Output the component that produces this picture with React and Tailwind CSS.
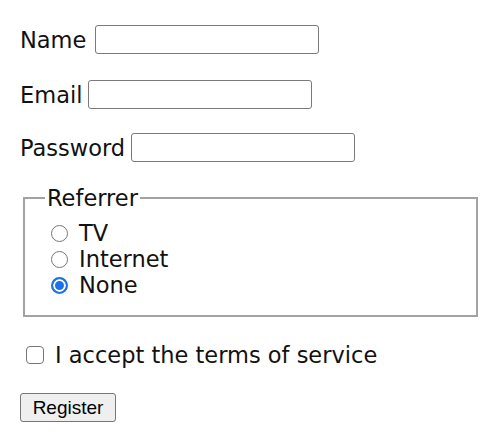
import React from "react";

const font = { fontFamily: '"DejaVu Sans", sans-serif' };

function Field({ label, id, type = "text", gap = "ml-[7px]" }) {
  return (
    <div className="flex items-center h-[29px]">
      <label htmlFor={id} className="leading-[26px]">{label}</label>
      <input
        id={id}
        type={type}
        className={`${gap} w-[224px] h-[29px] border border-[#7a7a7a] rounded-[3px] bg-white px-[3px] outline-none`}
      />
    </div>
  );
}

function Radio({ label, checked }) {
  return (
    <label className="flex items-center h-[26px] pl-[6px]">
      <input
        type="radio"
        name="ref"
        defaultChecked={checked}
        className="appearance-none w-[17px] h-[17px] m-0 rounded-full border border-[#767676] bg-white checked:border-2 checked:border-[#1a73e8] checked:bg-[#1a73e8] checked:shadow-[inset_0_0_0_2px_white]"
      />
      <span className="ml-[11px]">{label}</span>
    </label>
  );
}

export default function App() {
  return (
    <div className="bg-white w-[489px] h-[439px] pl-[20px] pt-[25px] text-[22.5px] leading-[26px] text-[#111]" style={font}>
      <Field label="Name" id="name" gap="ml-[9px]" />
      <div className="mt-[26px]">
        <Field label="Email" id="email" type="email" gap="ml-[6px]" />
      </div>
      <div className="mt-[24px]">
        <Field label="Password" id="pw" type="password" gap="ml-[6px]" />
      </div>
      <fieldset className="mt-[23px] ml-[3px] w-[455px] border-2 border-[#a2a2a2] pl-[20px] pb-[17px]">
        <legend className="px-[2px] leading-[26px]">Referrer</legend>
        <div className="pt-[9px]">
          <Radio label="TV" />
          <Radio label="Internet" />
          <Radio label="None" checked />
        </div>
      </fieldset>
      <label className="mt-[25px] flex items-center h-[26px] pl-[6px]">
        <input type="checkbox" className="appearance-none w-[18px] h-[18px] m-0 border border-[#767676] rounded-[4px] bg-white" />
        <span className="ml-[11px]">I accept the terms of service</span>
      </label>
      <button
        type="button"
        className="mt-[25px] block w-[96px] h-[29px] bg-[#efefef] border border-[#767676] rounded-[3px] text-[19px] leading-[27px] text-black"
        style={{ fontFamily: '"Liberation Sans", Arial, sans-serif' }}
      >
        Register
      </button>
    </div>
  );
}
